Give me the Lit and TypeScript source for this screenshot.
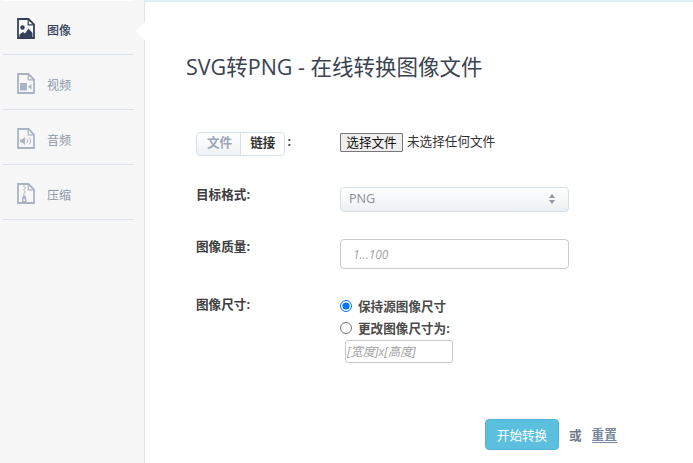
import { LitElement, html, css, svg } from "lit";
import { customElement } from "lit/decorators.js";

const fileBody = svg`<path d="M1 1H11.500L17 6.500V20H1Z" fill="none" stroke="currentColor" stroke-width="1.800"/><path d="M11.200 1V6.800H17" fill="none" stroke="currentColor" stroke-width="1.200"/>`;
const glyphs: Record<string, unknown> = {
  image: svg`<circle cx="5.500" cy="9.500" r="2.200" fill="currentColor"/><path d="M2.500 19V16.500L6 14L8 15.500L11.500 10.500L15.500 15V19Z" fill="currentColor"/>`,
  video: svg`<rect x="3" y="10" width="7" height="7.500" fill="currentColor"/><path d="M11 13.800L14.500 11V16.500Z" fill="currentColor"/>`,
  audio: svg`<path d="M3 11.500H5L8 9V17L5 14.500H3Z" fill="currentColor"/><path d="M9.800 11C10.800 12 10.800 14 9.800 15M12 9.500C14 11.500 14 14.500 12 16.500" fill="none" stroke="currentColor" stroke-width="1"/>`,
  zip: svg`<path d="M6 3H8M7 5H9M6 7H8M7 9H9M6 11H8" stroke="currentColor" stroke-width="1.100" fill="none"/><path d="M6 12.500H8.500L9.500 16V19H5V16Z" fill="currentColor"/><circle cx="7.200" cy="17" r="1" fill="#f7f7f7"/>`,
};

@customElement("app-root")
export class AppRoot extends LitElement {
  static styles = css`
    :host { display: block; width: 693px; height: 463px; overflow: hidden; background: #fff;
      font-family: "Open Sans", "Noto Sans CJK SC", sans-serif; font-size: 12.6px; color: #3f4a5a; }
    .page { display: flex; height: 463px; }
    .side { width: 145px; box-sizing: border-box; flex: none; background: #f7f7f7; border-right: 1px solid #dde5ee; position: relative; padding: 0 10px 0 3px; }
    .side::before { content: ""; display: block; height: 1px; margin-bottom: -1px; background: #fff; }
    .notch { position: absolute; right: -1px; top: 22px; width: 0; height: 0; border-style: solid; border-width: 9px 10px 9px 0; border-color: transparent #fff transparent transparent; }
    .item { height: 54px; display: flex; align-items: center; gap: 12px; padding-left: 14px; border-bottom: 1px solid #dbe2ec; color: #8b98ad; font-size: 12px; }
    .item span { position: relative; top: 3px; }
    .item.on { color: #34405a; font-weight: 500; }
    .item svg { width: 18px; height: 21px; flex: none; margin-top: 3px; }
    .item:not(.on) svg { color: #a9b3c4; }
    .main { flex: 1; min-width: 0; border-top: 2px solid #dff1f8; padding: 51px 0 0 41px; display: flex; flex-direction: column; }
    h1 { margin: 0 0 51px; font-size: 21.500px; font-weight: 400; line-height: 28px; color: #3a4350; white-space: nowrap; }
    .form { padding-left: 10px; }
    .row { display: flex; }
    .lab { width: 144px; flex: none; font-weight: 700; color: #3d3d3d; line-height: 16px; }
    .r1 { height: 55px; }
    .r2 { height: 52px; }
    .r3 { height: 58px; }
    .seg { display: inline-flex; height: 24px; box-sizing: border-box; border: 1px solid #d5dfe9; border-radius: 4px; overflow: hidden; line-height: 20px; color: #333; }
    .seg span { padding: 0 9px 0 9px; background: #fff; }
    .seg .act { padding: 0 8px 0 10px; color: #9aa7b8; background: linear-gradient(#fff, #eef2f5); border-right: 1px solid #d5dfe9; }
    .labseg { display: flex; gap: 2px; align-items: flex-start; line-height: 20px; }
    .file { display: flex; align-items: flex-start; gap: 4px; color: #333; line-height: 18px; margin-top: 1px; }
    .pick { height: 19px; box-sizing: border-box; width: 63px; padding: 0; border: 1px solid #767676; border-radius: 1px; background: #efefef; font: inherit; line-height: 17px; color: #111; }
    .sel { width: 229px; height: 25px; box-sizing: border-box; border: 1px solid #d5dfe9; border-radius: 4px; background: linear-gradient(#fff, #eceff2); display: flex; align-items: center; justify-content: space-between; padding: 0 13px 2px 8px; color: #8a8f96; }
    .arrows { display: flex; flex-direction: column; gap: 2px; }
    .arrows i { display: block; width: 0; height: 0; border-left: 3px solid transparent; border-right: 3px solid transparent; }
    .arrows i:first-child { border-bottom: 4px solid #8f98a3; }
    .arrows i:last-child { border-top: 4px solid #8f98a3; }
    .inp { width: 229px; height: 30px; box-sizing: border-box; border: 1px solid #c9c9c9; border-radius: 4px; display: flex; align-items: center; padding-left: 12px; color: #a3a3a3; font-style: italic; font-size: 12px; }
    .opts { display: flex; flex-direction: column; margin-top: -2px; }
    .opt { display: flex; align-items: center; height: 22px; gap: 6px; font-weight: 700; color: #4a4a4a; }
    .opt span { position: relative; top: -1px; }
    .opt input { margin: 0; width: 12px; height: 12px; }
    .dim { width: 108px; height: 23px; box-sizing: border-box; margin: 1px 0 0 5px; border: 1px solid #c9c9c9; border-radius: 3px; padding-left: 1px; line-height: 21px; color: #a3a3a3; font-style: italic; font-size: 12.200px; }
    .act-row { display: flex; align-items: center; margin-top: 56px; padding-left: 299px; }
    .go { width: 74px; height: 31px; box-sizing: border-box; border: 1px solid #52b3d8; border-radius: 4px; background: #5bc0de; color: #fff; font: inherit; padding: 0; }
    .or { margin-left: 10px; font-weight: 700; color: #6d7889; }
    .reset { margin-left: 10px; font-weight: 700; color: #75869f; border-bottom: 1px solid #75869f; line-height: 14px; margin-top: 1px; }
  `;

  private item(k: string, t: string, on = false) {
    return html`<div class="item ${on ? "on" : ""}">
      <svg viewBox="0 0 18 21">${fileBody}${glyphs[k]}</svg><span>${t}</span>
    </div>`;
  }

  render() {
    return html`<div class="page">
      <nav class="side">
        ${this.item("image", "图像", true)}
        ${this.item("video", "视频")}
        ${this.item("audio", "音频")}
        ${this.item("zip", "压缩")}
        <div class="notch"></div>
      </nav>
      <main class="main">
        <h1>SVG转PNG - 在线转换图像文件</h1>
        <div class="form">
          <div class="row r1">
            <div class="lab labseg"><div class="seg"><span class="act">文件</span><span>链接</span></div>:</div>
            <div class="file"><button class="pick">选择文件</button><span>未选择任何文件</span></div>
          </div>
          <div class="row r2">
            <div class="lab">目标格式:</div>
            <div class="sel">PNG<span class="arrows"><i></i><i></i></span></div>
          </div>
          <div class="row r3">
            <div class="lab">图像质量:</div>
            <div class="inp">1...100</div>
          </div>
          <div class="row">
            <div class="lab">图像尺寸:</div>
            <div class="opts">
              <label class="opt"><input type="radio" name="s" checked /><span>保持源图像尺寸</span></label>
              <label class="opt"><input type="radio" name="s" /><span>更改图像尺寸为:</span></label>
              <div class="dim">[宽度]x[高度]</div>
            </div>
          </div>
        </div>
        <div class="act-row"><button class="go">开始转换</button><span class="or">或</span><span class="reset">重置</span></div>
      </main>
    </div>`;
  }
}
